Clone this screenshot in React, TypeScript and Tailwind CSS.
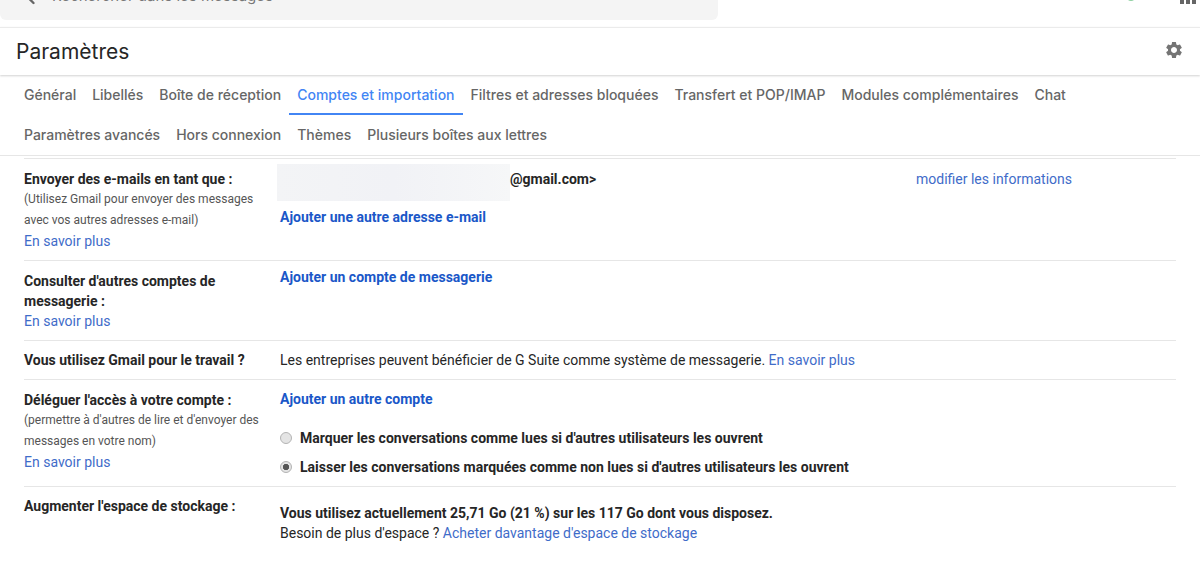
import type { ReactNode } from "react";
import { ChevronLeft } from "lucide-react";
import { MdSettings } from "react-icons/md";

const tabs = [
  "Général",
  "Libellés",
  "Boîte de réception",
  "Comptes et importation",
  "Filtres et adresses bloquées",
  "Transfert et POP/IMAP",
  "Modules complémentaires",
  "Chat",
  "Paramètres avancés",
  "Hors connexion",
  "Thèmes",
  "Plusieurs boîtes aux lettres",
];

function TextLink({ children, strong = false }: { children: ReactNode; strong?: boolean }) {
  return (
    <a href="#" className={strong ? "font-bold text-[#1a57c8]" : "text-[#3f6cc9]"}>
      {children}
    </a>
  );
}

type RowProps = {
  title: string;
  note?: string;
  more?: boolean;
  children: ReactNode;
};

function SettingRow({ title, note, more = false, children }: RowProps) {
  return (
    <section className="grid grid-cols-[253px_1fr] border-t border-[#e6e6e6]">
      <div className={more ? "pt-2.5 pb-[9px]" : "pt-[9px] pb-[9px]"}>
        <h2 className="pr-6 font-bold">{title}</h2>
        {note && <p className="pr-2 text-xs leading-[21px] text-[#555]">{note}</p>}
        {more && <TextLink>En savoir plus</TextLink>}
      </div>
      <div className="pb-[9px]">{children}</div>
    </section>
  );
}

function RadioOption({ label, checked = false }: { label: string; checked?: boolean }) {
  return (
    <label className="flex items-center font-bold">
      <input
        type="radio"
        name="delegation-read-state"
        defaultChecked={checked}
        className="mr-2 size-3 appearance-none rounded-full border border-[#b4b4b4] bg-[#e4e4e4] bg-radial checked:from-[#555] checked:from-40% checked:to-[#e4e4e4] checked:to-50%"
      />
      {label}
    </label>
  );
}

export default function App() {
  return (
    <div className="min-h-screen bg-white font-['Roboto',sans-serif] text-sm leading-5 text-[#262626]">
      <header className="flex h-[27px] items-end justify-between overflow-hidden pb-[7px]">
        <div className="flex h-12 w-[718px] shrink-0 items-center rounded-md bg-[#f4f4f4] pl-4">
          <button type="button" aria-label="Retour" className="text-[#666]">
            <ChevronLeft className="size-7" />
          </button>
          <input
            type="search"
            aria-label="Rechercher dans les messages"
            placeholder="Rechercher dans les messages"
            className="ml-2 flex-1 bg-transparent font-['Inter',sans-serif] text-[15px] outline-none placeholder:text-[#777]"
          />
        </div>
        <div className="flex h-12 shrink-0 items-center gap-11 pr-1">
          <svg width="10" height="10" viewBox="0 0 10 10" aria-hidden="true">
            <circle cx="5" cy="5" r="5" fill="#8fd0a2" />
          </svg>
          <button type="button" aria-label="Applications">
            <svg width="16" height="16" viewBox="0 0 16 16" fill="#666">
              <path d="M0 0h4v4H0zM6 0h4v4H6zM12 0h4v4h-4zM0 6h4v4H0zM6 6h4v4H6zM12 6h4v4h-4zM0 12h4v4H0zM6 12h4v4H6zM12 12h4v4h-4z" />
            </svg>
          </button>
        </div>
      </header>

      <div className="flex h-12 items-center justify-between border-t border-[#ebebeb] px-4 pb-[3px] shadow-[0_1px_2px_rgba(0,0,0,0.18)]">
        <h1 className="pt-[3px] font-['Inter',sans-serif] text-[21px]">Paramètres</h1>
        <button type="button" aria-label="Paramètres" className="text-[#757575]">
          <MdSettings className="size-5" />
        </button>
      </div>

      <nav className="flex flex-wrap border-b border-[#e6e6e6] px-4 font-['Inter',sans-serif] text-sm font-medium text-[#666]">
        {tabs.map((tab) => (
          <a
            key={tab}
            href="#"
            aria-current={tab === "Comptes et importation" ? "page" : undefined}
            className="flex h-10 items-center border-b-2 border-transparent px-2 pt-0.5 aria-[current=page]:border-[#4285f4] aria-[current=page]:text-[#4285f4]"
          >
            {tab}
          </a>
        ))}
      </nav>

      <main className="mx-6 mt-0.5">
        <SettingRow
          title="Envoyer des e-mails en tant que :"
          note="(Utilisez Gmail pour envoyer des messages avec vos autres adresses e-mail)"
          more
        >
          <div className="flex pt-[5px]">
            <div className="h-[37px] w-[233px] bg-linear-to-r from-[#f3f4f6] via-[#f1f2f6] to-[#f6f7f8]" />
            <span className="flex-1 pt-[5px] font-bold">@gmail.com&gt;</span>
            <div className="w-[260px] pt-[5px]">
              <TextLink>modifier les informations</TextLink>
            </div>
          </div>
          <div className="pt-1.5 pl-[3px]">
            <TextLink strong>Ajouter une autre adresse e-mail</TextLink>
          </div>
        </SettingRow>

        <SettingRow title="Consulter d'autres comptes de messagerie :" more>
          <div className="pt-1.5 pl-[3px]">
            <TextLink strong>Ajouter un compte de messagerie</TextLink>
          </div>
        </SettingRow>

        <SettingRow title="Vous utilisez Gmail pour le travail ?">
          <p className="pt-[9px] pl-[3px]">
            Les entreprises peuvent bénéficier de G Suite comme système de messagerie.{" "}
            <TextLink>En savoir plus</TextLink>
          </p>
        </SettingRow>

        <SettingRow
          title="Déléguer l'accès à votre compte :"
          note="(permettre à d'autres de lire et d'envoyer des messages en votre nom)"
          more
        >
          <div className="flex flex-col gap-[9px] pt-[9px] pl-[3px]">
            <div className="pb-2.5">
              <TextLink strong>Ajouter un autre compte</TextLink>
            </div>
            <RadioOption label="Marquer les conversations comme lues si d'autres utilisateurs les ouvrent" />
            <RadioOption
              label="Laisser les conversations marquées comme non lues si d'autres utilisateurs les ouvrent"
              checked
            />
          </div>
        </SettingRow>

        <SettingRow title="Augmenter l'espace de stockage :">
          <div className="pt-4 pl-[3px]">
            <p className="font-bold">Vous utilisez actuellement 25,71 Go (21 %) sur les 117 Go dont vous disposez.</p>
            <p>
              Besoin de plus d'espace ? <TextLink>Acheter davantage d'espace de stockage</TextLink>
            </p>
          </div>
        </SettingRow>
      </main>
    </div>
  );
}
